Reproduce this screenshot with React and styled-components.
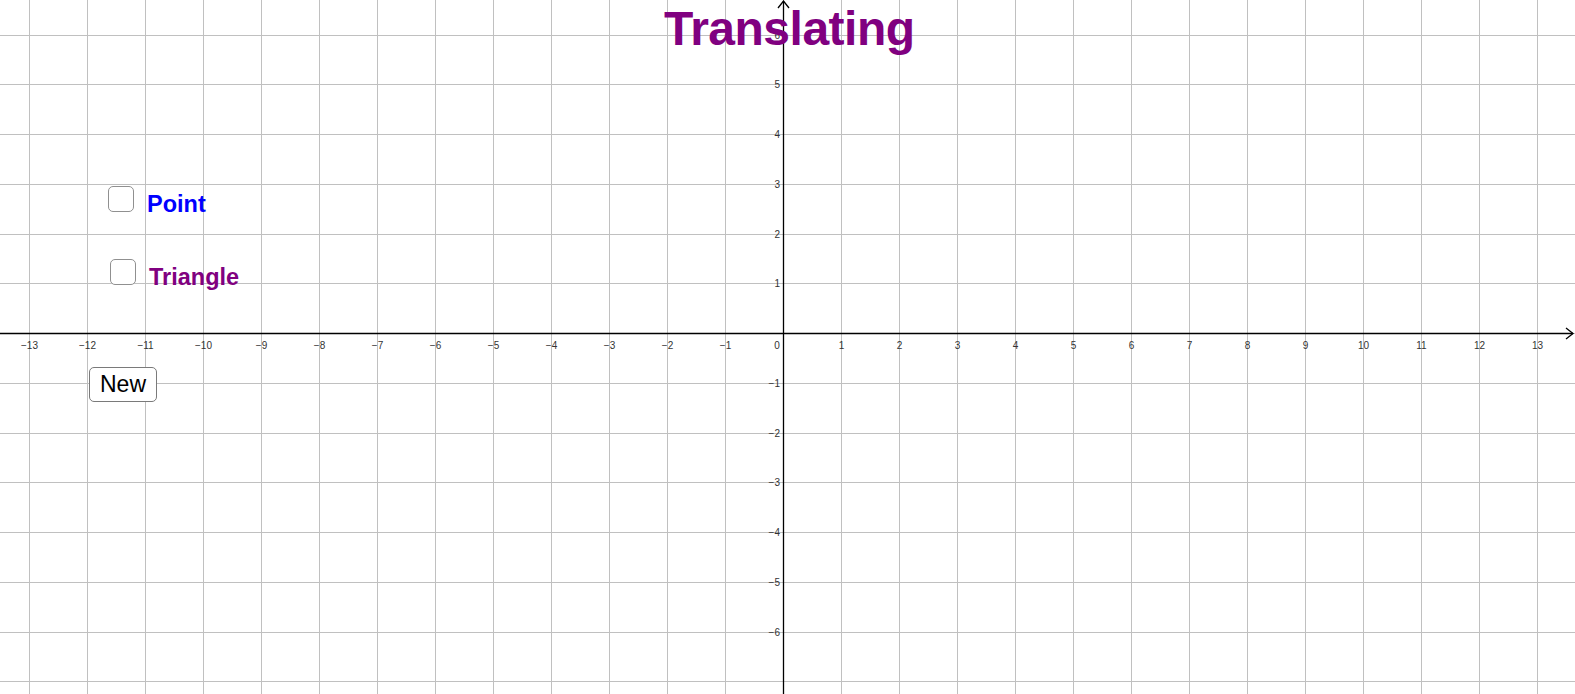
import React from 'react';
import styled, { createGlobalStyle } from 'styled-components';

const W = 1575;
const H = 694;
const OX = 783;
const OY = 333;
const UX = 58;
const UY = 49.75;

const GlobalStyle = createGlobalStyle`
  html, body {
    margin: 0;
    padding: 0;
    background: #fff;
    overflow: hidden;
  }
  body {
    font-family: "Liberation Sans", Arial, sans-serif;
  }
`;

const Canvas = styled.div`
  position: relative;
  width: ${W}px;
  height: ${H}px;
  background: #ffffff;
  overflow: hidden;
`;

const Graph = styled.svg`
  display: block;
  position: absolute;
  inset: 0;
`;

const Title = styled.div`
  position: absolute;
  left: 664px;
  top: 0px;
  font-size: 48px;
  font-weight: bold;
  letter-spacing: -0.5px;
  color: #800080;
  line-height: 58px;
`;

const CheckItem = styled.label`
  position: absolute;
  left: ${(p) => p.x}px;
  top: ${(p) => p.y}px;
  display: flex;
  align-items: flex-start;
  gap: 13px;
  cursor: pointer;
`;

const Box = styled.span`
  flex: none;
  width: 24px;
  height: 24px;
  border: 1.5px solid #909090;
  border-radius: 5px;
  background: #fff;
`;

const CheckText = styled.span`
  font-size: 23.5px;
  font-weight: bold;
  color: ${(p) => p.color};
  line-height: 27px;
  margin-top: 5px;
`;

const NewButton = styled.button`
  position: absolute;
  left: 89px;
  top: 367px;
  width: 68px;
  height: 35px;
  padding: 0;
  background: #fff;
  border: 1.5px solid #7a7a7a;
  border-radius: 5px;
  font-family: "Liberation Sans", Arial, sans-serif;
  font-size: 23px;
  color: #000;
  cursor: pointer;
`;

const xs = [];
for (let i = -13; i <= 13; i++) xs.push(i);
const ys = [];
for (let j = -7; j <= 6; j++) ys.push(j);

const fmt = (n) => (n < 0 ? '\u2212' + Math.abs(n) : String(n));

function Grid() {
  return (
    <Graph width={W} height={H} viewBox={`0 0 ${W} ${H}`}>
      <g stroke="#c0c0c0" strokeWidth="1">
        {xs.map((i) => (
          <line key={'v' + i} x1={OX + i * UX + 0.5} y1={0} x2={OX + i * UX + 0.5} y2={H} />
        ))}
        {ys.map((j) => {
          const y = Math.round(OY - j * UY) + 0.5;
          return <line key={'h' + j} x1={0} y1={y} x2={W} y2={y} />;
        })}
      </g>
      <g stroke="#000" strokeWidth="1.3" fill="none">
        <line x1={0} y1={OY + 0.5} x2={W - 2} y2={OY + 0.5} />
        <polyline points={`${W - 9},${OY - 5} ${W - 2},${OY + 0.5} ${W - 9},${OY + 6}`} />
        <line x1={OX + 0.5} y1={1} x2={OX + 0.5} y2={H} />
        <polyline points={`${OX - 5},8 ${OX + 0.5},1 ${OX + 6},8`} />
      </g>
      <g fill="#333" fontSize="10" fontFamily="Liberation Sans, Arial, sans-serif">
        {xs.map((i) =>
          i === 0 ? null : (
            <text key={'xl' + i} x={OX + i * UX + 0.5} y={OY + 15.5} textAnchor="middle">
              {fmt(i)}
            </text>
          )
        )}
        <text x={OX - 6} y={OY + 15.5} textAnchor="middle">0</text>
        {ys.map((j) =>
          j === 0 || j === -7 ? null : (
            <text key={'yl' + j} x={OX - 3} y={Math.round(OY - j * UY) + 4} textAnchor="end">
              {fmt(j)}
            </text>
          )
        )}
      </g>
    </Graph>
  );
}

export default function App() {
  return (
    <>
      <GlobalStyle />
      <Canvas>
        <Grid />
        <Title>Translating</Title>
        <CheckItem x={108} y={186}>
          <Box />
          <CheckText color="#0000ff">Point</CheckText>
        </CheckItem>
        <CheckItem x={110} y={259}>
          <Box />
          <CheckText color="#800080">Triangle</CheckText>
        </CheckItem>
        <NewButton>New</NewButton>
      </Canvas>
    </>
  );
}
